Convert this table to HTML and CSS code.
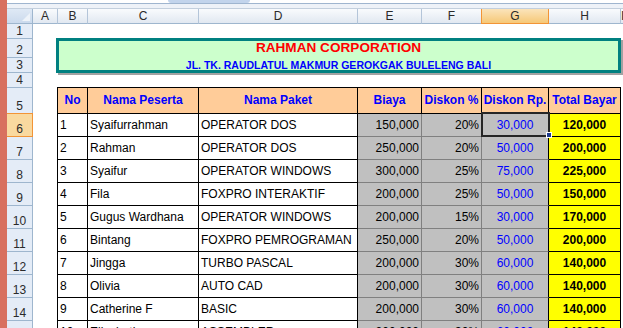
FILE: index.html
```html
<!DOCTYPE html>
<html>
<head>
<meta charset="utf-8">
<link rel="stylesheet" href="styles.css">
</head>
<body>
<div class="window">
  <div class="frame-strip"></div>
  <div class="main">
    <div class="ribbon-edge"><div class="tab"></div></div>
    <div class="formula-gap"></div>

    <div class="row h15">
      <div class="c w-rh corner"></div>
      <div class="c w-a ch">A</div>
      <div class="c w-b ch">B</div>
      <div class="c w-c ch">C</div>
      <div class="c w-d ch">D</div>
      <div class="c w-e ch">E</div>
      <div class="c w-f ch">F</div>
      <div class="c w-g ch sel">G</div>
      <div class="c w-h ch">H</div>
      <div class="c w-i ch">I</div>
    </div>

    <div class="row h15"><div class="c w-rh rh">1</div></div>

    <div class="title-band">
      <div class="rh-stack">
        <div class="w-rh rh rh2">2</div>
        <div class="w-rh rh rh3">3</div>
      </div>
      <div class="w-a"></div>
      <div class="title-box">
        <div class="t1">RAHMAN CORPORATION</div>
        <div class="t2">JL. TK. RAUDLATUL MAKMUR GEROKGAK BULELENG BALI</div>
      </div>
    </div>

    <div class="row h15">
      <div class="c w-rh rh">4</div>
      <div class="a-short"></div>
      <div class="topline"></div>
    </div>

    <div class="row h26">
      <div class="c w-rh rh">5</div>
      <div class="c w-a tb"></div>
      <div class="c w-b d th">No</div>
      <div class="c w-c d th">Nama Peserta</div>
      <div class="c w-d d th">Nama Paket</div>
      <div class="c w-e d th">Biaya</div>
      <div class="c w-f d th">Diskon %</div>
      <div class="c w-g d th">Diskon Rp.</div>
      <div class="c w-h d th">Total Bayar</div>
    </div>

    <div class="row h23">
      <div class="c w-rh rh sel">6</div>
      <div class="c w-a tb"></div>
      <div class="c w-b d">1</div>
      <div class="c w-c d">Syaifurrahman</div>
      <div class="c w-d d">OPERATOR DOS</div>
      <div class="c w-e d gray num">150,000</div>
      <div class="c w-f d gray num">20%</div>
      <div class="c w-g d gray ctr blue active">30,000<span class="sel-box"></span><span class="handle"></span></div>
      <div class="c w-h d yel">120,000</div>
    </div>

    <div class="row h23">
      <div class="c w-rh rh">7</div>
      <div class="c w-a tb"></div>
      <div class="c w-b d">2</div>
      <div class="c w-c d">Rahman</div>
      <div class="c w-d d">OPERATOR DOS</div>
      <div class="c w-e d gray num">250,000</div>
      <div class="c w-f d gray num">20%</div>
      <div class="c w-g d gray ctr blue">50,000</div>
      <div class="c w-h d yel">200,000</div>
    </div>

    <div class="row h23">
      <div class="c w-rh rh">8</div>
      <div class="c w-a tb"></div>
      <div class="c w-b d">3</div>
      <div class="c w-c d">Syaifur</div>
      <div class="c w-d d">OPERATOR WINDOWS</div>
      <div class="c w-e d gray num">300,000</div>
      <div class="c w-f d gray num">25%</div>
      <div class="c w-g d gray ctr blue">75,000</div>
      <div class="c w-h d yel">225,000</div>
    </div>

    <div class="row h23">
      <div class="c w-rh rh">9</div>
      <div class="c w-a tb"></div>
      <div class="c w-b d">4</div>
      <div class="c w-c d">Fila</div>
      <div class="c w-d d">FOXPRO INTERAKTIF</div>
      <div class="c w-e d gray num">200,000</div>
      <div class="c w-f d gray num">25%</div>
      <div class="c w-g d gray ctr blue">50,000</div>
      <div class="c w-h d yel">150,000</div>
    </div>

    <div class="row h23">
      <div class="c w-rh rh">10</div>
      <div class="c w-a tb"></div>
      <div class="c w-b d">5</div>
      <div class="c w-c d">Gugus Wardhana</div>
      <div class="c w-d d">OPERATOR WINDOWS</div>
      <div class="c w-e d gray num">200,000</div>
      <div class="c w-f d gray num">15%</div>
      <div class="c w-g d gray ctr blue">30,000</div>
      <div class="c w-h d yel">170,000</div>
    </div>

    <div class="row h23">
      <div class="c w-rh rh">11</div>
      <div class="c w-a tb"></div>
      <div class="c w-b d">6</div>
      <div class="c w-c d">Bintang</div>
      <div class="c w-d d">FOXPRO PEMROGRAMAN</div>
      <div class="c w-e d gray num">250,000</div>
      <div class="c w-f d gray num">20%</div>
      <div class="c w-g d gray ctr blue">50,000</div>
      <div class="c w-h d yel">200,000</div>
    </div>

    <div class="row h23">
      <div class="c w-rh rh">12</div>
      <div class="c w-a tb"></div>
      <div class="c w-b d">7</div>
      <div class="c w-c d">Jingga</div>
      <div class="c w-d d">TURBO PASCAL</div>
      <div class="c w-e d gray num">200,000</div>
      <div class="c w-f d gray num">30%</div>
      <div class="c w-g d gray ctr blue">60,000</div>
      <div class="c w-h d yel">140,000</div>
    </div>

    <div class="row h23">
      <div class="c w-rh rh">13</div>
      <div class="c w-a tb"></div>
      <div class="c w-b d">8</div>
      <div class="c w-c d">Olivia</div>
      <div class="c w-d d">AUTO CAD</div>
      <div class="c w-e d gray num">200,000</div>
      <div class="c w-f d gray num">30%</div>
      <div class="c w-g d gray ctr blue">60,000</div>
      <div class="c w-h d yel">140,000</div>
    </div>

    <div class="row h23">
      <div class="c w-rh rh">14</div>
      <div class="c w-a tb"></div>
      <div class="c w-b d">9</div>
      <div class="c w-c d">Catherine F</div>
      <div class="c w-d d">BASIC</div>
      <div class="c w-e d gray num">200,000</div>
      <div class="c w-f d gray num">30%</div>
      <div class="c w-g d gray ctr blue">60,000</div>
      <div class="c w-h d yel">140,000</div>
    </div>

    <div class="row h23">
      <div class="c w-rh rh">15</div>
      <div class="c w-a tb"></div>
      <div class="c w-b d">10</div>
      <div class="c w-c d">Elisabeth</div>
      <div class="c w-d d">ASSEMBLER</div>
      <div class="c w-e d gray num">200,000</div>
      <div class="c w-f d gray num">30%</div>
      <div class="c w-g d gray ctr blue">60,000</div>
      <div class="c w-h d yel">140,000</div>
    </div>
  </div>
</div>
</body>
</html>
```

FILE: styles.css
```css
* { box-sizing: border-box; }
html, body { margin: 0; padding: 0; background: #fff; }
body {
  width: 623px;
  height: 328px;
  overflow: hidden;
  font-family: "Liberation Sans", Arial, sans-serif;
}
.window { display: flex; height: 328px; }
.frame-strip { width: 7px; flex: none; background: #d8705f; }
.main { flex: 1; min-width: 0; overflow: hidden; }

.ribbon-edge {
  height: 4px;
  background: #fff;
  border-bottom: 1px solid #9fb5cf;
  position: relative;
}
.tab {
  position: absolute;
  left: 161px;
  top: 0;
  width: 82px;
  height: 3px;
  background: #c2d4ec;
  border-radius: 0 0 4px 4px;
}
.formula-gap {
  height: 5px;
  background: #eef2f8;
  border-bottom: 1px solid #c3cfdd;
}

.row { display: flex; }
.h15 { height: 15px; }
.h23 { height: 23px; }
.h26 { height: 26px; }

.c {
  flex: none;
  height: 100%;
  display: flex;
  align-items: center;
  white-space: nowrap;
}
.w-rh { width: 26px; }
.w-a { width: 25px; flex: none; }
.w-b { width: 30px; }
.w-c { width: 111px; }
.w-d { width: 159px; }
.w-e { width: 64px; }
.w-f { width: 60px; }
.w-g { width: 67px; }
.w-h { width: 72px; }
.w-i { flex: 1; }

/* column headers */
.corner {
  position: relative;
  background: linear-gradient(#dfe9f5, #cbdaed);
  border-right: 1px solid #9eb6ce;
  border-bottom: 1px solid #9eb6ce;
}
.corner::after {
  content: "";
  position: absolute;
  right: 2px;
  bottom: 2px;
  width: 0;
  height: 0;
  border-left: 8px solid transparent;
  border-bottom: 8px solid #eef3f9;
}
.ch {
  justify-content: center;
  background: linear-gradient(#f9fbfd, #e1e8f1);
  border-right: 1px solid #b4c5d9;
  border-bottom: 1px solid #9eb6ce;
  font-size: 12px;
  color: #2a2a2a;
}
.ch.sel {
  background: linear-gradient(#fbe4bb, #f6c877);
  border-right-color: #f29436;
  border-bottom-color: #f29436;
  box-shadow: -1px 0 0 #f29436;
}

/* row headers */
.rh {
  display: flex;
  justify-content: center;
  align-items: flex-end;
  background: #e4ecf7;
  border-right: 1px solid #9eb6ce;
  border-bottom: 1px solid #9eb6ce;
  font-size: 12px;
  line-height: 14px;
  color: #2a2a2a;
}
.rh.sel {
  background: #f9d99f;
  border-right-color: #f29436;
  border-bottom-color: #f29436;
  box-shadow: 0 -1px 0 #f29436;
}

/* title */
.title-band { display: flex; height: 34px; }
.rh-stack { display: flex; flex-direction: column; flex: none; }
.rh2 { height: 19px; flex: none; }
.rh3 { height: 15px; flex: none; }
.title-box {
  flex: none;
  width: 565px;
  height: 35px;
  margin-left: -2px;
  margin-top: -1px;
  background: #ccffcc;
  border: 3px solid #008080;
  box-shadow: 2px 2px 0 #a2a2a2;
  text-align: center;
  font-weight: bold;
}
.t1 {
  color: #ff0000;
  font-size: 13.6px;
  line-height: 14px;
}
.t2 {
  color: #0000ff;
  font-size: 10.5px;
  line-height: 13px;
  margin-top: 4px;
}

/* table top edge */
.a-short { width: 24px; flex: none; }
.topline {
  width: 564px;
  flex: none;
  height: 100%;
  border-bottom: 1px solid #000;
}
.tb { border-right: 1px solid #000; }

/* data cells */
.d {
  padding: 0 2px;
  font-size: 12px;
  color: #000;
  border-right: 1px solid #000;
  border-bottom: 1px solid #000;
}
.th {
  justify-content: center;
  background: #ffcc99;
  color: #0000ff;
  font-weight: bold;
  padding: 0 1px 1px;
}
.gray {
  background: #c0c0c0;
  border-right-color: #808080;
  border-bottom-color: #808080;
}
.w-g.gray { border-right-color: #000; }
.num { justify-content: flex-end; }
.ctr { justify-content: center; }
.blue { color: #0000ff; }
.yel {
  justify-content: center;
  background: #ffff00;
  font-weight: bold;
}

.active { position: relative; }
.sel-box {
  position: absolute;
  left: -1px;
  top: -2px;
  width: 69px;
  height: 25px;
  border: 2px solid #262626;
}
.handle {
  position: absolute;
  left: 64px;
  top: 18px;
  width: 6px;
  height: 6px;
  background: #1f3c8c;
  border: 1px solid #fff;
}
```
